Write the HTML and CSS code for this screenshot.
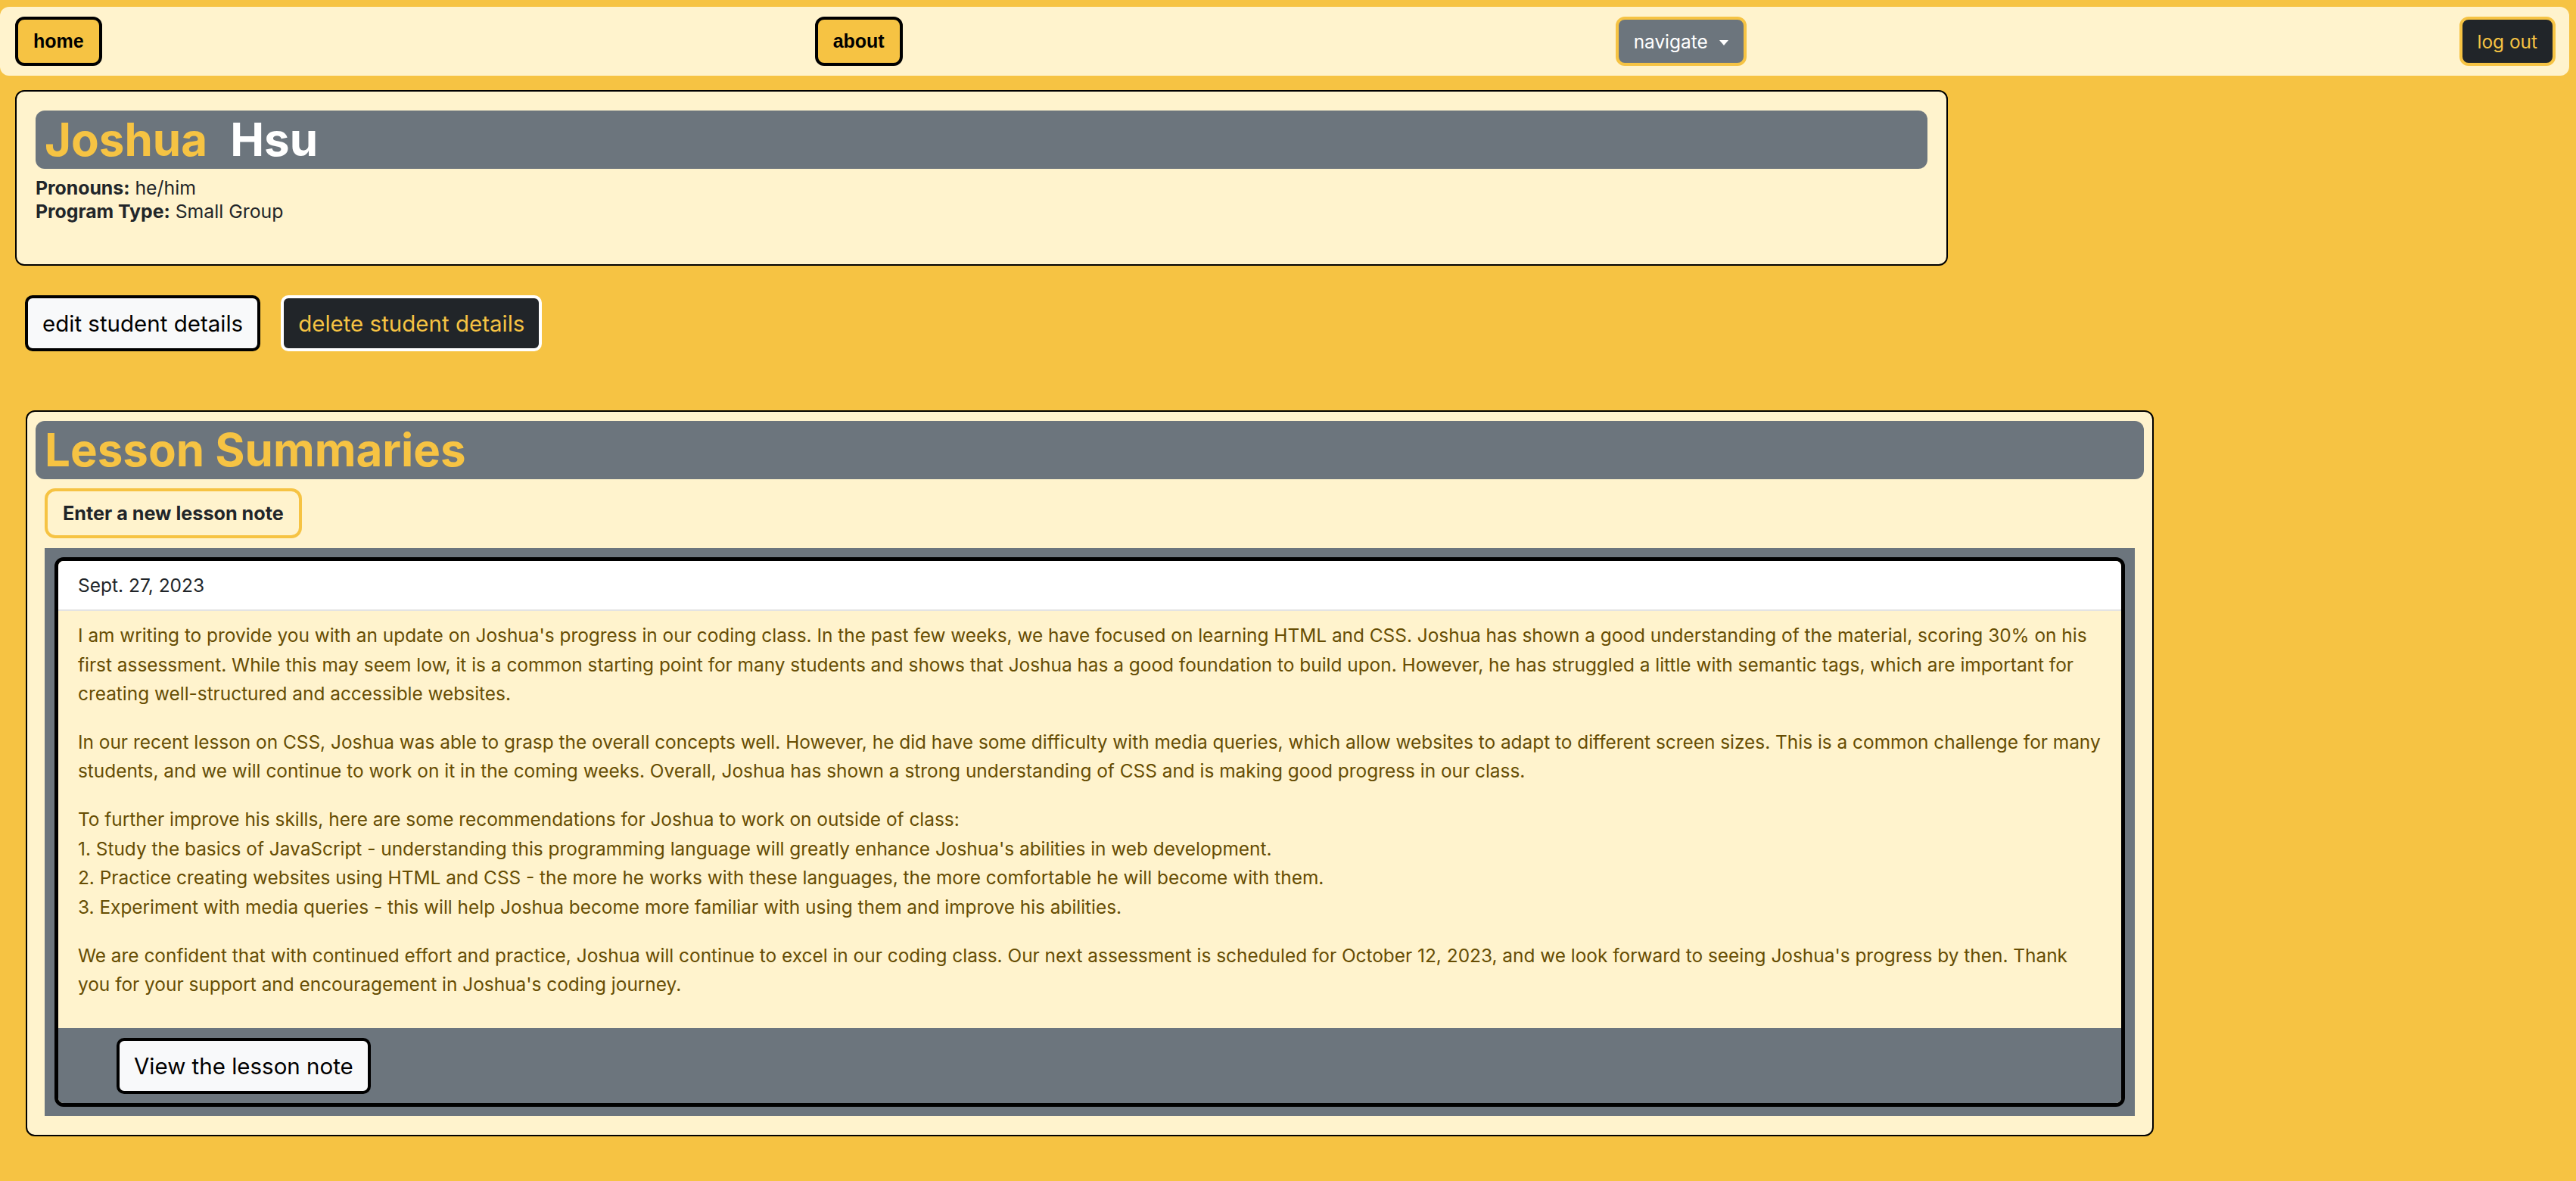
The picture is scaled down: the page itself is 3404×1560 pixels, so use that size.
FILE: index.html
```html
<!DOCTYPE html>
<html lang="en">
<head>
    <meta charset="UTF-8">
    <meta name="viewport" content="width=device-width, initial-scale=1.0">
    <title>Joshua Hsu | Student Details</title>
    <link rel="stylesheet" href="styles.css">
</head>
<body>
    <nav class="topbar">
        <button class="nav-btn nav-btn-link">home</button>
        <button class="nav-btn nav-btn-link">about</button>
        <button class="nav-btn nav-btn-menu">navigate<span class="caret"></span></button>
        <button class="nav-btn nav-btn-logout">log out</button>
    </nav>

    <main>
        <section class="student-card">
            <h1 class="name-bar"><span class="first-name">Joshua</span> <span class="last-name">Hsu</span></h1>
            <div class="student-info">
                <strong>Pronouns:</strong> he/him<br>
                <strong>Program Type:</strong> Small Group
            </div>
        </section>

        <div class="student-actions">
            <button class="btn btn-light">edit student details</button>
            <button class="btn btn-dark">delete student details</button>
        </div>

        <section class="lesson-card">
            <h2 class="lesson-title">Lesson Summaries</h2>
            <div class="lesson-section">
                <button class="btn-new">Enter a new lesson note</button>
                <div class="note-list">
                    <article class="note">
                        <header class="note-header">Sept. 27, 2023</header>
                        <div class="note-body">
                            <p>I am writing to provide you with an update on Joshua's progress in our coding class. In the past few weeks, we have focused on learning HTML and CSS. Joshua has shown a good understanding of the material, scoring 30% on his<br>
                            first assessment. While this may seem low, it is a common starting point for many students and shows that Joshua has a good foundation to build upon. However, he has struggled a little with semantic tags, which are important for<br>
                            creating well-structured and accessible websites.</p>
                            <p>In our recent lesson on CSS, Joshua was able to grasp the overall concepts well. However, he did have some difficulty with media queries, which allow websites to adapt to different screen sizes. This is a common challenge for many<br>
                            students, and we will continue to work on it in the coming weeks. Overall, Joshua has shown a strong understanding of CSS and is making good progress in our class.</p>
                            <p>To further improve his skills, here are some recommendations for Joshua to work on outside of class:<br>
                            1. Study the basics of JavaScript - understanding this programming language will greatly enhance Joshua's abilities in web development.<br>
                            2. Practice creating websites using HTML and CSS - the more he works with these languages, the more comfortable he will become with them.<br>
                            3. Experiment with media queries - this will help Joshua become more familiar with using them and improve his abilities.</p>
                            <p>We are confident that with continued effort and practice, Joshua will continue to excel in our coding class. Our next assessment is scheduled for October 12, 2023, and we look forward to seeing Joshua's progress by then. Thank<br>
                            you for your support and encouragement in Joshua's coding journey.</p>
                        </div>
                        <footer class="note-footer">
                            <button class="btn btn-light">View the lesson note</button>
                        </footer>
                    </article>
                </div>
            </div>
        </section>
    </main>
</body>
</html>
```

FILE: styles.css
```css
* {
    box-sizing: border-box;
}

body {
    margin: 0;
    background: #f6c343;
    color: #212529;
    font-family: Inter, "Noto Sans", sans-serif;
}

button {
    cursor: pointer;
}

/* top navigation */
.topbar {
    display: flex;
    justify-content: space-between;
    align-items: center;
    margin: 9px 9px 0 0;
    padding: 13px 18px 13px 20px;
    background: #fff3cd;
    border-radius: 12px;
}

.nav-btn {
    font-family: Inter, sans-serif;
    font-size: 24.4px;
    line-height: 38px;
    padding: 9.5px 20px;
    border: 4px solid #f6c343;
    border-radius: 12px;
}

.nav-btn-link {
    background: #f6c343;
    border-color: #000;
    color: #000;
    font-family: "Liberation Sans", Arial, sans-serif;
    font-weight: bold;
    font-size: 25px;
    line-height: 29px;
    padding: 14px 20px;
}

.nav-btn-menu {
    background: #6c757d;
    color: #fff;
    padding: 9.5px 20px;
}

.caret {
    display: inline-block;
    margin-left: 15px;
    vertical-align: 4px;
    border-top: 7px solid #fff;
    border-left: 6.5px solid transparent;
    border-right: 6.5px solid transparent;
}

.nav-btn-logout {
    background: #212529;
    color: #f6c343;
}

/* student details */
.student-card {
    width: 2554px;
    margin: 19px 0 0 20px;
    padding: 25px;
    background: #fff3cd;
    border: 2px solid #000;
    border-radius: 12px;
}

.name-bar {
    margin: 0 0 10px;
    padding: 0 12px;
    font-size: 60px;
    font-weight: 700;
    line-height: 77px;
    background: #6c757d;
    border-radius: 12px;
}

.first-name {
    color: #f6c343;
}

.last-name {
    color: #fff;
    margin-left: 16px;
}

.student-info {
    font-size: 24.8px;
    line-height: 30.7px;
    margin-bottom: 30px;
}

.student-actions {
    display: flex;
    gap: 27px;
    margin: 39px 0 0 33px;
}

.btn {
    font-family: Inter, sans-serif;
    font-size: 29.5px;
    line-height: 42px;
    padding: 12px 19px;
    border: 4px solid #000;
    border-radius: 10px;
}

.btn-light {
    background: #f8f9fa;
    color: #000;
}

.btn-dark {
    background: #212529;
    border-color: #fff;
    color: #f6c343;
}

/* lessons */
.lesson-card {
    width: 2812px;
    margin: 78px 0 0 34px;
    padding: 12px 11px 13px;
    background: #fff3cd;
    border: 2px solid #000;
    border-radius: 12px;
}

.lesson-title {
    margin: 0;
    padding: 0 12px;
    font-size: 60px;
    font-weight: 700;
    line-height: 77px;
    color: #f6c343;
    background: #6c757d;
    border-radius: 12px;
}

.lesson-section {
    display: flex;
    flex-direction: column;
    align-items: flex-start;
    gap: 13px;
    padding: 12px;
}

.btn-new {
    font-family: Inter, sans-serif;
    font-size: 25.2px;
    font-weight: 700;
    line-height: 38.4px;
    padding: 9.8px 20px;
    color: #212529;
    background: transparent;
    border: 4px solid #f6c343;
    border-radius: 14px;
}

.note-list {
    align-self: stretch;
    padding: 12px 13px;
    background: #6c757d;
}

.note {
    background: #fff3cd;
    border: 5px solid #000;
    border-radius: 12px;
    overflow: hidden;
}

.note-header {
    padding: 12.8px 26px;
    font-size: 24.5px;
    line-height: 38.4px;
    background: #fff;
    border-bottom: 2px solid #e3e3e3;
}

.note-body {
    padding: 12.8px 10px 12.8px 26px;
    font-size: 24.4px;
    line-height: 38.4px;
    color: #664d03;
}

.note-body p {
    margin: 0 0 25.6px;
}

.note-footer {
    padding: 13px 26px 12px 77px;
    background: #6c757d;
}
```
